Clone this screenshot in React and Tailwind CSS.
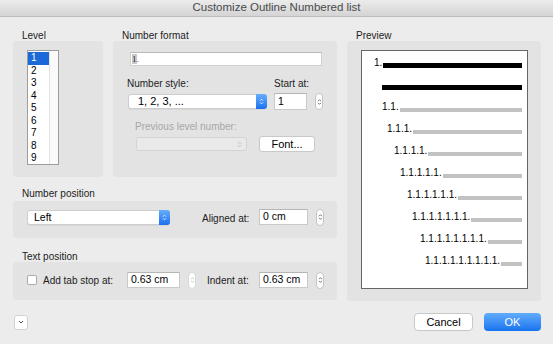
import React from 'react';

function Chevs({ color = '#4a4a4a', w = 6, h = 10 }) {
  return (
    <svg width={w} height={h} viewBox="0 0 6 10">
      <path d="M1.2 4 L3 2.2 L4.8 4 M1.2 6 L3 7.8 L4.8 6" fill="none" stroke={color} strokeWidth="1" />
    </svg>
  );
}

function Stepper({ disabled }) {
  return (
    <div
      className={`w-[8px] h-[17px] rounded-full bg-white border flex items-center justify-center ${
        disabled ? 'border-[#d8d8d8]' : 'border-[#c4c4c4]'
      }`}
    >
      <Chevs w={5} h={10} color={disabled ? '#c0c0c0' : '#555'} />
    </div>
  );
}

function Label({ children, className = '' }) {
  return <div className={`h-[11px] leading-[11px] text-[10px] pl-[9px] text-[#1c1c1c] ${className}`}>{children}</div>;
}

function Field({ value, w }) {
  return (
    <div
      className={`${w} h-[16px] bg-white border border-[#c9c9c9] border-t-[#b5b5b5] flex items-center pl-[3px] text-[10.5px] text-black`}
    >
      {value}
    </div>
  );
}

function BlueSelect({ value, w, textCls = 'text-[10.5px] pl-[6px]' }) {
  return (
    <div className={`${w} h-[15px] bg-white rounded-[3px] border border-[#cdcdcd] flex items-center shadow-[0_1px_0_rgba(0,0,0,0.05)]`}>
      <span className={`flex-1 ${textCls} text-black leading-none`}>{value}</span>
      <div className="w-[11px] h-[15px] -mr-px rounded-r-[3px] bg-gradient-to-b from-[#64aefc] to-[#1b6ff0] flex items-center justify-center">
        <Chevs color="#fff" w={5} h={9} />
      </div>
    </div>
  );
}

const previewRows = [
  { pl: 'pl-[12px]', text: '1.', black: true },
  { pl: 'pl-[19px]', text: '', black: true },
  { pl: 'pl-[20px]', text: '1.1.' },
  { pl: 'pl-[25px]', text: '1.1.1.' },
  { pl: 'pl-[32px]', text: '1.1.1.1.' },
  { pl: 'pl-[38px]', text: '1.1.1.1.1.' },
  { pl: 'pl-[45px]', text: '1.1.1.1.1.1.' },
  { pl: 'pl-[50px]', text: '1.1.1.1.1.1.1.' },
  { pl: 'pl-[58px]', text: '1.1.1.1.1.1.1.1.' },
  { pl: 'pl-[63px]', text: '1.1.1.1.1.1.1.1.1.' },
];

export default function App() {
  return (
    <div className="w-[553px] h-[344px] bg-[#ececec] flex flex-col overflow-hidden font-['Liberation_Sans',Arial,sans-serif]">
      {/* title bar */}
      <div className="h-[17px] shrink-0 bg-gradient-to-b from-[#ececec] to-[#d4d4d4] border-b border-[#bdbdbd] flex items-center justify-center text-[11.5px] text-[#4a4a4a]">
        Customize Outline Numbered list
      </div>

      <div className="flex pl-[13px] pt-[13px] gap-[10px]">
        {/* left column */}
        <div className="w-[324px] flex flex-col">
          <div className="flex gap-[10px]">
            <div className="w-[90px]">
              <Label>Level</Label>
              <div className="h-[136px] bg-[#e3e3e3] rounded-[4px] pt-[9px] pl-[14px]">
                <div className="w-[32px] h-[115px] bg-white border border-[#9d9d9d] flex">
                  <div className="w-[21px] pt-[1px]">
                    {['1', '2', '3', '4', '5', '6', '7', '8', '9'].map((n, i) => (
                      <div
                        key={n}
                        className={`h-[12.5px] leading-[12.5px] text-[10px] pl-[3px] ${
                          i === 0 ? 'bg-[#1b69d8] text-white' : 'text-black'
                        }`}
                      >
                        {n}
                      </div>
                    ))}
                  </div>
                  <div className="flex-1 bg-[#fafafa] border-l border-[#e4e4e4]" />
                </div>
              </div>
            </div>

            <div className="w-[224px]">
              <Label>Number format</Label>
              <div className="h-[136px] bg-[#e3e3e3] rounded-[4px] pt-[11px]">
                <div className="ml-[17px] w-[192px] h-[14px] bg-white border border-[#d0d0d0] border-t-[#bababa] flex items-center pl-[1px]">
                  <span className="bg-[#c8c8c8] text-[9px] leading-[10px] font-['Liberation_Serif',serif] text-[#333]">1</span>
                  <span className="text-[9px] leading-[10px] font-['Liberation_Serif',serif] text-[#333]">.</span>
                </div>
                <div className="flex mt-[12px] h-[12px] leading-[12px] text-[10px] text-[#1c1c1c]">
                  <span className="ml-[14px] w-[147px]">Number style:</span>
                  <span>Start at:</span>
                </div>
                <div className="flex items-center mt-[3px] ml-[15px]">
                  <BlueSelect value="1, 2, 3, ..." w="w-[139px]" textCls="text-[11px] pl-[9px]" />
                  <div className="ml-[7px]">
                    <Field value="1" w="w-[33px] h-[17px]" />
                  </div>
                  <div className="ml-[8px]">
                    <Stepper />
                  </div>
                </div>
                <div className="mt-[11px] ml-[22px] h-[12px] leading-[12px] text-[10px] text-[#a7a7a7]">
                  Previous level number:
                </div>
                <div className="flex items-center mt-[3px] ml-[23px]">
                  <div className="w-[111px] h-[14px] rounded-[3px] bg-[#e9e9e9] border border-[#d3d3d3] flex items-center justify-end pr-[4px]">
                    <Chevs color="#b3b3b3" w={5} h={9} />
                  </div>
                  <div className="ml-[12px] w-[56px] h-[16px] bg-white border border-[#c8c8c8] rounded-[3px] flex items-center justify-center text-[11px] text-black">
                    Font...
                  </div>
                </div>
              </div>
            </div>
          </div>

          <Label className="mt-[11px]">Number position</Label>
          <div className="mt-[2px] h-[37px] bg-[#e3e3e3] rounded-[4px] pt-[8px] pl-[14px] flex items-start">
            <div className="flex items-center h-[16px]">
              <BlueSelect value="Left" w="w-[143px]" />
              <span className="ml-[32px] w-[57px] text-[10px] text-[#1c1c1c] pt-[2px]">Aligned at:</span>
              <Field value="0 cm" w="w-[49px]" />
              <div className="ml-[8px]">
                <Stepper />
              </div>
            </div>
          </div>

          <Label className="mt-[13px]">Text position</Label>
          <div className="h-[38px] bg-[#e3e3e3] rounded-[4px] pt-[10px] pl-[14px]">
            <div className="flex items-center h-[16px]">
              <div className="w-[10px] h-[10px] bg-white border border-[#ababab] rounded-[2px]" />
              <span className="ml-[6px] w-[84px] text-[10px] text-[#1c1c1c]">Add tab stop at:</span>
              <Field value="0.63 cm" w="w-[53px]" />
              <div className="ml-[8px]">
                <Stepper disabled />
              </div>
              <span className="ml-[11px] w-[52px] text-[10px] text-[#1c1c1c]">Indent at:</span>
              <Field value="0.63 cm" w="w-[49px]" />
              <div className="ml-[8px]">
                <Stepper />
              </div>
            </div>
          </div>
        </div>

        {/* preview column */}
        <div className="w-[194px]">
          <Label>Preview</Label>
          <div className="h-[260px] bg-[#e3e3e3] rounded-[4px] pt-[9px] pl-[14px]">
            <div className="w-[167px] h-[239px] bg-white border border-[#666] pt-[1px] pr-[5px]">
              {previewRows.map((r, i) => (
                <div key={i} className={`h-[22px] flex items-center ${r.pl}`}>
                  {r.text && <span className="text-[10px] leading-[10px] text-black">{r.text}</span>}
                  <div
                    className={`flex-1 ml-[1px] ${
                      r.black ? 'h-[5px] mt-[5px] bg-black' : 'h-[4px] mt-[6px] bg-[#c2c2c2]'
                    }`}
                  />
                </div>
              ))}
            </div>
          </div>
        </div>
      </div>

      {/* bottom buttons */}
      <div className="flex items-center mt-[12px] pl-[14px] pr-[12px]">
        <div className="w-[14px] h-[15px] bg-white border border-[#d2d2d2] rounded-[3px] flex items-center justify-center">
          <svg width="6" height="4" viewBox="0 0 6 4">
            <path d="M1 1 L3 3 L5 1" fill="none" stroke="#555" strokeWidth="1" />
          </svg>
        </div>
        <div className="flex-1" />
        <div className="w-[59px] h-[18px] bg-white border border-[#c8c8c8] rounded-[4px] flex items-center justify-center text-[11px] text-black">
          Cancel
        </div>
        <div className="ml-[11px] w-[57px] h-[18px] rounded-[4px] bg-gradient-to-b from-[#62acfd] to-[#1473ef] flex items-center justify-center text-[11px] text-white">
          OK
        </div>
      </div>
    </div>
  );
}
